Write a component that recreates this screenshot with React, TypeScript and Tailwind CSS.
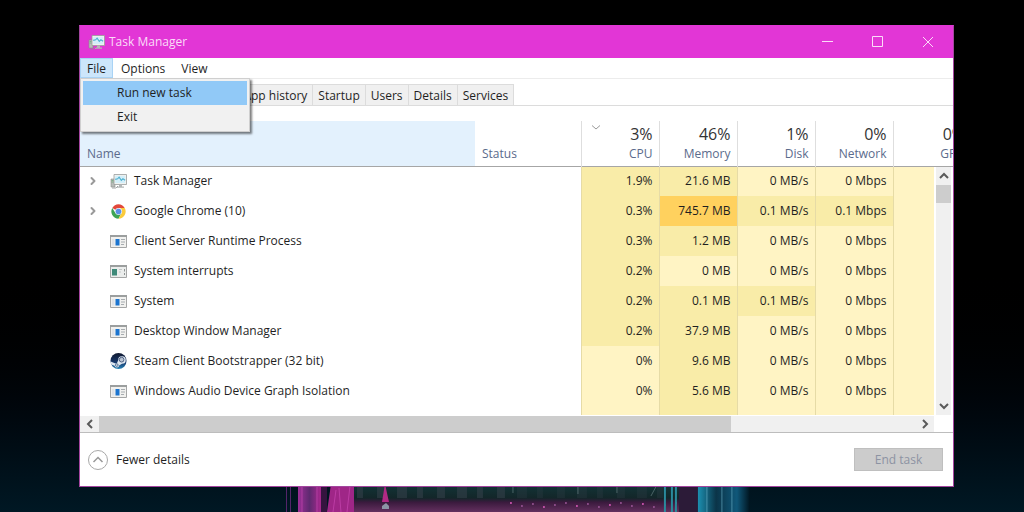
import { ChevronRight } from 'lucide-react';

const TABS = ['Processes', 'Performance', 'App history', 'Startup', 'Users', 'Details', 'Services'];

const HEADS = [
  { name: 'CPU', total: '3%' },
  { name: 'Memory', total: '46%' },
  { name: 'Disk', total: '1%' },
  { name: 'Network', total: '0%' },
  { name: 'GPU', total: '0%' },
];

// heat: l = light, m = medium, h = hot
const ROWS = [
  { name: 'Task Manager', icon: 'taskmgr', expand: true, values: ['1.9%', '21.6 MB', '0 MB/s', '0 Mbps', ''], heat: 'mmlll' },
  { name: 'Google Chrome (10)', icon: 'chrome', expand: true, values: ['0.3%', '745.7 MB', '0.1 MB/s', '0.1 Mbps', ''], heat: 'mhmml' },
  { name: 'Client Server Runtime Process', icon: 'app', values: ['0.3%', '1.2 MB', '0 MB/s', '0 Mbps', ''], heat: 'mmlll' },
  { name: 'System interrupts', icon: 'interrupts', values: ['0.2%', '0 MB', '0 MB/s', '0 Mbps', ''], heat: 'mllll' },
  { name: 'System', icon: 'app', values: ['0.2%', '0.1 MB', '0.1 MB/s', '0 Mbps', ''], heat: 'mmmll' },
  { name: 'Desktop Window Manager', icon: 'app', values: ['0.2%', '37.9 MB', '0 MB/s', '0 Mbps', ''], heat: 'mmlll' },
  { name: 'Steam Client Bootstrapper (32 bit)', icon: 'steam', values: ['0%', '9.6 MB', '0 MB/s', '0 Mbps', ''], heat: 'lmlll' },
  { name: 'Windows Audio Device Graph Isolation', icon: 'app', values: ['0%', '5.6 MB', '0 MB/s', '0 Mbps', ''], heat: 'lmlll' },
  { name: '', icon: 'app', values: ['', '', '', '', ''], heat: 'lmlll' },
];

const HEAT: Record<string, string> = {
  l: 'bg-[#fff4c4]',
  m: 'bg-[#f9eca8]',
  h: 'bg-[#ffd15e]',
};

function TaskMgrIcon() {
  return (
    <svg viewBox="0 0 17 16" className="h-4 w-[17px]">
      <path d="M1 6h4v8H1z" fill="#b9bdb9" stroke="#8b8f8b" strokeWidth=".6" />
      <path d="M1.6 7.5h2M1.6 9h2" stroke="#6fae7c" strokeWidth=".8" />
      <path d="M4 1.5h12.5v10H4z" fill="#f2f2ef" stroke="#989c9c" strokeWidth=".8" />
      <path d="M5.2 2.800h10v7.300h-10z" fill="#d3effa" />
      <path d="M5.200 6.400l2.400-.6 1.500-1.600 2.200 3.200 1.600-1.600 2.300 1.400" fill="none" stroke="#4fb0cf" strokeWidth="1.1" />
      <path d="M9 11.500h3v2H9zM7 13.500h7v1.300H7z" fill="#b4b8b8" />
      <path d="M2 15h4l2-2" fill="none" stroke="#8f9393" strokeWidth=".8" />
    </svg>
  );
}

function ChromeIcon() {
  return (
    <svg viewBox="0 0 48 48" className="h-[15px] w-[15px]">
      <path d="M24 24L4.100 12.500A23 23 0 0 1 43.900 12.500L24 13z" fill="#e2483b" />
      <path d="M4.100 12.500A23 23 0 0 0 24 47L33.500 29.500L24 24L14.500 29.500z" fill="#3da455" />
      <path d="M43.900 12.500A23 23 0 0 1 24 47L33.500 29.500A11 11 0 0 0 24 12.500z" fill="#fbcb3c" />
      <circle cx="24" cy="24" r="11" fill="#e4ecf8" />
      <circle cx="24" cy="24" r="9" fill="#5a8fe6" />
    </svg>
  );
}

function SteamIcon() {
  return (
    <svg viewBox="0 0 18 18" className="h-[18px] w-[18px]">
      <defs>
        <linearGradient id="steam" x1="0" y1="0" x2="0" y2="1">
          <stop offset="0" stopColor="#10182f" />
          <stop offset=".6" stopColor="#17396d" />
          <stop offset="1" stopColor="#2a86b8" />
        </linearGradient>
      </defs>
      <circle cx="9" cy="9" r="8.500" fill="url(#steam)" />
      <path d="M.7 9.600l5.100 2.100a2.400 2.400 0 0 1 1.500-.4l1.400-3.100a4 4 0 1 1 4 3.800l-3 1.700a2.500 2.500 0 0 1-4.900.4L1.300 12.600z" fill="#dfe7f0" />
      <circle cx="12.300" cy="7.600" r="2.500" fill="#b9c4d3" stroke="#3b4f75" strokeWidth=".9" />
      <circle cx="7.200" cy="13.300" r="1.400" fill="none" stroke="#1c3f70" strokeWidth=".7" />
    </svg>
  );
}

function AppIcon() {
  return (
    <svg viewBox="0 0 17 13" className="h-[13px] w-[17px]">
      <path d="M.5.5h16v12H.5z" fill="#f1f1ef" stroke="#a5a6a6" />
      <path d="M0 0h17v2H0z" fill="#9b9e9e" />
      <path d="M5.500 4h4v6.500h-4z" fill="#1b74cf" />
      <path d="M2 4h2.500v6.500H2z" fill="#dfe3e8" />
      <path d="M11 4.500h4M11 7h4M11 9.500h3" stroke="#a7acb0" />
    </svg>
  );
}

function InterruptsIcon() {
  return (
    <svg viewBox="0 0 17 13" className="h-[13px] w-[17px]">
      <path d="M.5.5h16v12H.5z" fill="#ebedec" stroke="#a5a6a6" />
      <path d="M0 0h17v2H0z" fill="#9b9e9e" />
      <path d="M2 4h5v6.500H2z" fill="#3f8a7a" />
      <path d="M9 4.500h3M9 7h2" stroke="#c3c7c7" />
      <path d="M14.500 4v2.500M14.500 8v2" stroke="#8d9292" />
    </svg>
  );
}

function RowIcon({ kind }: { kind: string }) {
  if (kind === 'taskmgr') return <TaskMgrIcon />;
  if (kind === 'chrome') return <ChromeIcon />;
  if (kind === 'steam') return <SteamIcon />;
  if (kind === 'interrupts') return <InterruptsIcon />;
  return <AppIcon />;
}

function Arrow({ d }: { d: string }) {
  return (
    <svg viewBox="0 0 10 10" className="h-[10px] w-[10px]">
      <path d={d} fill="none" stroke="#5a5a5a" strokeWidth="2" />
    </svg>
  );
}

function Wallpaper() {
  const columns = Array.from({ length: 16 }, (_, i) => i);
  return (
    <svg viewBox="0 0 466 28" preserveAspectRatio="none" className="absolute bottom-0 left-[27.800%] h-7 w-[45.500%]">
      <defs>
        <linearGradient id="floor" x1="0" y1="0" x2="0" y2="1">
          <stop offset="0" stopColor="#123538" />
          <stop offset=".5" stopColor="#132629" />
          <stop offset=".65" stopColor="#3a1a3d" />
          <stop offset="1" stopColor="#64305f" />
        </linearGradient>
        <linearGradient id="pink" x1="0" y1="0" x2="1" y2="0">
          <stop offset="0" stopColor="#9c2f97" />
          <stop offset=".5" stopColor="#5f2a70" />
          <stop offset="1" stopColor="#a8288f" />
        </linearGradient>
        <linearGradient id="glow" x1="0" y1="0" x2="1" y2="0">
          <stop offset="0" stopColor="#1c8fb0" />
          <stop offset=".35" stopColor="#0b3448" />
          <stop offset=".75" stopColor="#10587a" />
          <stop offset="1" stopColor="#00141f" />
        </linearGradient>
      </defs>
      <path d="M1.500 0v28M5.500 0v28" stroke="#54256c" />
      <rect x="13" width="23" height="28" fill="url(#pink)" />
      <rect x="36" width="6" height="28" fill="#35143f" />
      <path d="M42 28L46 0h23v28z" fill="#9f2687" />
      <path d="M48 28l3-22M56 28l-2-24M62 28l3-26M17 0v28M32 0v28" stroke="#cf4bb8" opacity=".6" />
      <rect x="69" width="329" height="28" fill="url(#floor)" />
      {columns.map(i => (
        <rect key={i} x={72 + i * 20} y="0" width={6 + (i % 3) * 2} height="14" fill="#33404a" opacity={i < 8 ? 0.6 : 0.3} />
      ))}
      <path d="M97 18l3-18 4 18z" fill="#b12a84" />
      <path d="M97 22l4-3 3 3v3h-7z" fill="#8c95a5" />
      {columns.map(i => (
        <circle key={i} cx={226 + i * 11} cy={19 + (i * 3) % 5} r=".9" fill={i % 3 ? '#a05a9c' : '#e75fc4'} />
      ))}
      <path d="M228 2v7M293 3v7M332 1v8M366 12l6-11" stroke="#7f9a9c" opacity=".5" />
      <path d="M380 0v28M387 0v28M391 0v28" stroke="#2a8a9c" strokeWidth="2" />
      <rect x="394" width="19" height="28" fill="#2c1b38" />
      <rect x="413" width="52" height="28" fill="url(#glow)" />
      <path d="M422 0v28M437 0v28M447 0v28" stroke="#6fb4cc" opacity=".6" />
    </svg>
  );
}

export default function App() {
  return (
    <div className="relative flex h-screen flex-col bg-linear-to-b from-black from-50% to-[#001824] pt-[25px] pr-[70px] pb-[25px] pl-[79px] font-['Open_Sans','Noto_Sans',sans-serif] text-xs text-[#1f1f1f]">
      <Wallpaper />
      <div className="relative flex min-h-0 flex-1 flex-col border border-[#a4459f] border-t-[#e236d6] bg-white">
        <header className="flex h-8 shrink-0 items-center bg-[#e236d6] pl-2 text-[#fbdcf8]">
          <TaskMgrIcon />
          <h1 className="ml-1 flex-1">Task Manager</h1>
          <button aria-label="Minimize" className="flex h-8 w-[50px] items-center justify-center">
            <svg viewBox="0 0 12 12" className="h-3 w-3"><path d="M0 5.500h11" stroke="currentColor" /></svg>
          </button>
          <button aria-label="Maximize" className="flex h-8 w-[50px] items-center justify-center">
            <svg viewBox="0 0 12 12" className="h-3 w-3"><path d="M.5.5h10v10H.5z" fill="none" stroke="currentColor" /></svg>
          </button>
          <button aria-label="Close" className="flex h-8 w-[50px] items-center justify-center">
            <svg viewBox="0 0 12 12" className="h-3 w-3"><path d="M1 1l10 10M11 1L1 11" stroke="currentColor" /></svg>
          </button>
        </header>

        <nav className="relative flex h-[21px] shrink-0 border-b border-[#ececec]">
          <button className="border border-[#a9d3f5] bg-[#cce6fb] px-1.5 pt-px">File</button>
          <button className="px-2 pt-px">Options</button>
          <button className="px-2 pt-px">View</button>
          <div className="absolute top-5 left-0 z-10 flex w-[170px] flex-col border border-[#cfcfcf] bg-[#f1f1f1] p-0.5 shadow-[2px_2px_2px_rgba(0,0,0,0.5)]">
            <button className="h-6 bg-[#91c9f7] pl-[34px] text-left">Run new task</button>
            <button className="h-6 pl-[34px] text-left">Exit</button>
          </div>
        </nav>

        <div className="flex h-[27px] shrink-0 items-end border-b border-[#dcdcdc] pl-2">
          {TABS.map(tab => (
            <button key={tab} className="h-[21px] border-t border-r border-[#dcdcdc] bg-[#f0f0f0] px-[5px] pt-px">{tab}</button>
          ))}
        </div>

        <div className="relative mt-[15px] min-h-0 flex-1 overflow-hidden">
          <table className="w-[calc(100%+18px)] table-fixed border-collapse">
            <colgroup>
              <col />
              <col className="w-[106px]" />
              {HEADS.map(h => <col key={h.name} className="w-[78px]" />)}
            </colgroup>
            <thead>
              <tr className="h-[45px] border-b border-[#a6a6a6] text-[#5b6b8c]">
                <th className="bg-[#e3f1fd] pb-1 pl-[7px] text-left align-bottom font-normal">Name</th>
                <th className="pb-1 pl-[7px] text-left align-bottom font-normal">Status</th>
                {HEADS.map(h => (
                  <th key={h.name} className="relative border-l border-[#dedede] pr-1.5 pb-1 text-right align-bottom font-normal">
                    {h.name === 'CPU' && (
                      <svg viewBox="0 0 8 5" className="absolute top-1 left-2.5 h-[5px] w-2"><path d="M0 .5l4 3.500 4-3.500" fill="none" stroke="#999" /></svg>
                    )}
                    <div className="text-base leading-6 text-[#333]">{h.total}</div>
                    <div>{h.name}</div>
                  </th>
                ))}
              </tr>
            </thead>
            <tbody>
              {ROWS.map((row, i) => (
                <tr key={i} className="h-[30px]">
                  <td>
                    <div className="flex items-center">
                      <span className="w-[30px] pl-[7px]">
                        {row.expand && <ChevronRight className="h-3 w-3 text-[#999]" strokeWidth={4} />}
                      </span>
                      <span className="flex w-[17px] justify-center"><RowIcon kind={row.icon} /></span>
                      <span className="ml-[7px] whitespace-nowrap">{row.name}</span>
                    </div>
                  </td>
                  <td></td>
                  {row.values.map((value, j) => (
                    <td key={j} className={`border-l border-[#e6dba6] pr-1.5 text-right whitespace-nowrap ${HEAT[row.heat[j]]}`}>{value}</td>
                  ))}
                </tr>
              ))}
            </tbody>
          </table>
          <div className="absolute top-[46px] right-0 bottom-0 flex w-[19px] flex-col items-center border-x-2 border-white bg-[#f0f0f0] py-1">
            <Arrow d="M1 7l4-4 4 4" />
            <div className="mt-1 h-[18px] w-full bg-[#cdcdcd]" />
            <div className="flex-1" />
            <Arrow d="M1 3l4 4 4-4" />
          </div>
        </div>

        <div className="mt-px flex h-[17px] shrink-0 items-center border-b border-[#bdbdbd] pr-[19px]">
          <div className="flex h-full flex-1 items-center bg-[#f0f0f0]">
            <span className="flex w-[19px] justify-center"><Arrow d="M7 1l-4 4 4 4" /></span>
            <div className="h-full w-[74%] bg-[#cdcdcd]" />
            <div className="flex-1" />
            <span className="flex w-[19px] justify-center"><Arrow d="M3 1l4 4-4 4" /></span>
          </div>
        </div>

        <footer className="flex h-[53px] shrink-0 items-center justify-between pr-2.5 pl-2">
          <button className="flex items-center gap-2">
            <svg viewBox="0 0 20 20" className="h-5 w-5">
              <circle cx="10" cy="10" r="9.500" fill="none" stroke="#a8a8a8" />
              <path d="M5.500 12L10 7.500l4.500 4.500" fill="none" stroke="#999" strokeWidth="1.500" />
            </svg>
            Fewer details
          </button>
          <button disabled className="h-[23px] w-[89px] border border-[#bfbfbf] bg-[#cccccc] text-[#8c93a3]">End task</button>
        </footer>
      </div>
    </div>
  );
}
